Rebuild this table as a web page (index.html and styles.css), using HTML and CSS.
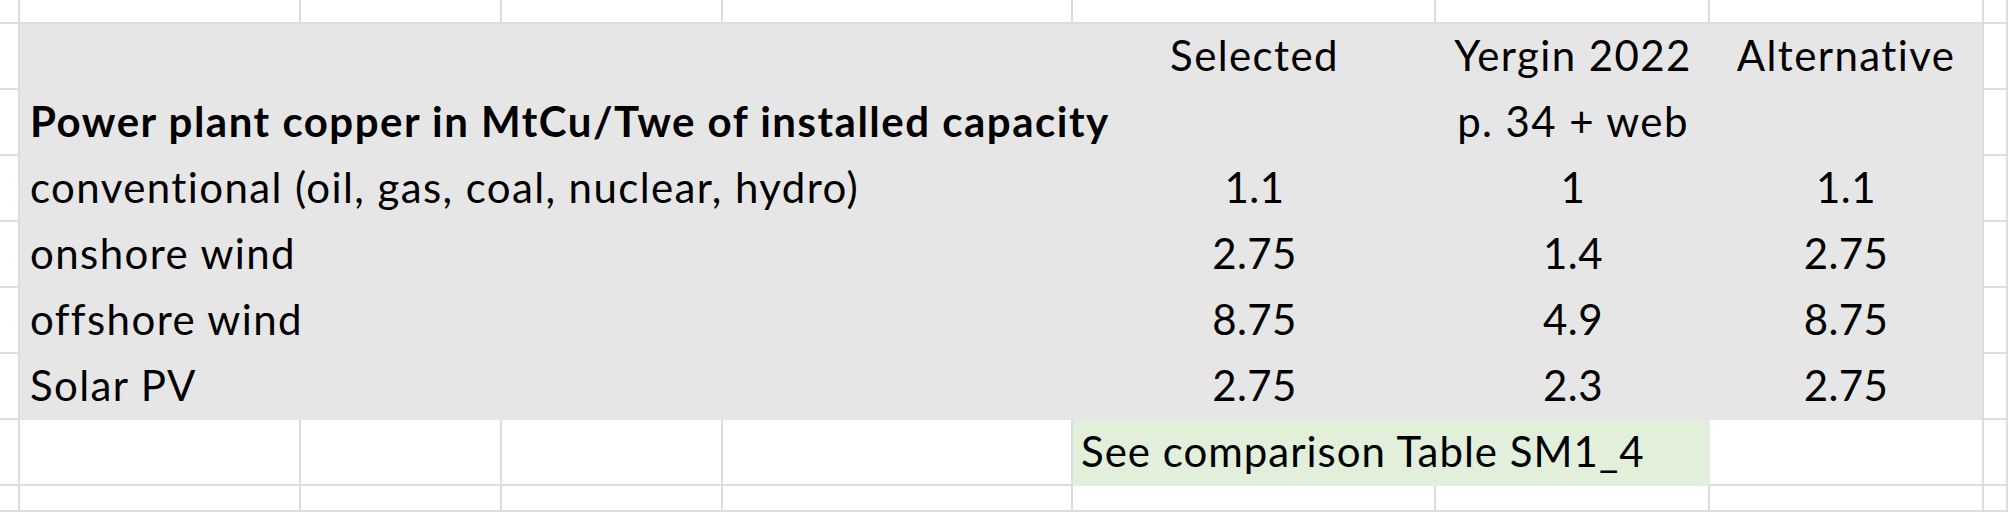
FILE: index.html
```html
<!DOCTYPE html>
<html lang="en">
<head>
<meta charset="utf-8">
<title>Power plant copper</title>
<link rel="stylesheet" href="styles.css">
</head>
<body>
<div class="sheet">
  <div class="block">
    <div class="t f">Selected</div>
    <div class="t g">Yergin 2022</div>
    <div class="t h">Alternative</div>

    <div class="t lab bold">Power plant copper in MtCu/Twe of installed capacity</div>
    <div class="t g">p. 34 + web</div>

    <div class="t lab">conventional (oil, gas, coal, nuclear, hydro)</div>
    <div class="t f num">1.1</div>
    <div class="t g num">1</div>
    <div class="t h num">1.1</div>

    <div class="t lab">onshore wind</div>
    <div class="t f num">2.75</div>
    <div class="t g num">1.4</div>
    <div class="t h num">2.75</div>

    <div class="t lab">offshore wind</div>
    <div class="t f num">8.75</div>
    <div class="t g num">4.9</div>
    <div class="t h num">8.75</div>

    <div class="t lab">Solar PV</div>
    <div class="t f num">2.75</div>
    <div class="t g num">2.3</div>
    <div class="t h num">2.75</div>
  </div>

  <div class="note t">See comparison Table SM1_4</div>

  <!-- empty cells with gridlines -->
  <div class="c"></div><div class="c"></div><div class="c"></div><div class="c"></div><div class="c"></div><div class="c"></div><div class="c"></div><div class="c"></div><div class="c"></div>
  <div class="c"></div><div class="c"></div>
  <div class="c"></div><div class="c"></div>
  <div class="c"></div><div class="c"></div>
  <div class="c"></div><div class="c"></div>
  <div class="c"></div><div class="c"></div>
  <div class="c"></div><div class="c"></div>
  <div class="c"></div><div class="c"></div><div class="c"></div><div class="c"></div><div class="c"></div><div class="c"></div><div class="c"></div>
  <div class="c"></div><div class="c"></div><div class="c"></div><div class="c"></div><div class="c"></div><div class="c"></div><div class="c"></div><div class="c"></div><div class="c"></div>
</div>
</body>
</html>
```

FILE: styles.css
```css
html, body {
  margin: 0;
  padding: 0;
  background: #ffffff;
}

body {
  width: 2008px;
  height: 512px;
  overflow: hidden;
  font-family: "Lato", "Noto Sans", sans-serif;
  color: #000000;
}

.sheet {
  display: grid;
  grid-template-columns: 20px 281px 201px 221px 350px 363px 274px 274px 1fr;
  grid-template-rows: 24px repeat(7, 66px) 1fr;
  height: 512px;
}

.c {
  box-sizing: border-box;
  border-right: 2px solid #dcdcdc;
  border-bottom: 2px solid #dcdcdc;
}

.block {
  grid-column: 2 / 9;
  grid-row: 2 / 8;
  box-sizing: border-box;
  background: #e7e6e6;
  border-right: 2px solid #dcdcdc;
  display: grid;
  grid-template-columns: 281px 201px 221px 350px 363px 274px 272px;
  grid-template-rows: repeat(6, 66px);
}

.t {
  display: flex;
  align-items: flex-end;
  box-sizing: border-box;
  padding-bottom: 14px;
  font-size: 42px;
  line-height: 1;
  letter-spacing: 1.4px;
  white-space: nowrap;
}

.num {
  letter-spacing: 0.4px;
}

.lab {
  grid-column: 1 / 5;
  padding-left: 10px;
}

.bold {
  font-weight: 700;
  letter-spacing: 1.5px;
}

.f, .g, .h {
  justify-content: center;
}

.f { grid-column: 5; }
.g { grid-column: 6; }
.h { grid-column: 7; }

.note {
  grid-column: 6 / 8;
  grid-row: 8;
  background: #e2efda;
  padding-left: 8px;
  letter-spacing: 1px;
}
```
